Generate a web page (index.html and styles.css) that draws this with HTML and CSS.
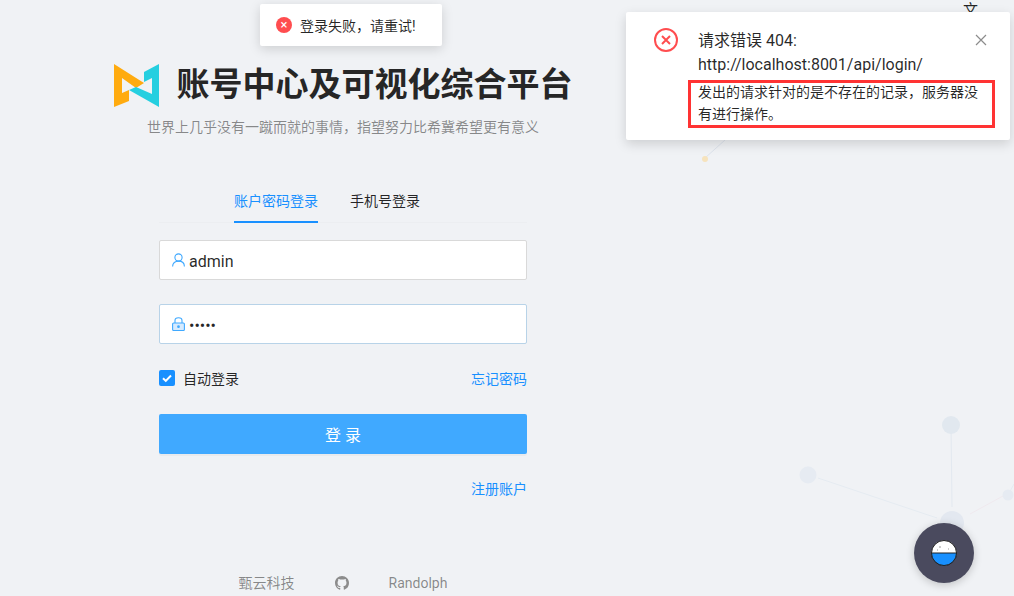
FILE: index.html
```html
<!DOCTYPE html>
<html lang="zh-CN">
<head>
  <meta charset="UTF-8" />
  <title>账号中心及可视化综合平台</title>
  <link rel="stylesheet" href="styles.css">
</head>
<body>
  <svg class="decor" width="1014" height="596" viewBox="0 0 1014 596">
    <line x1="725" y1="140" x2="705" y2="158" stroke="#dde3ec" />
    <circle cx="705" cy="159" r="3" fill="#f6e3bd" />
    <line x1="951" y1="425" x2="952" y2="507" stroke="#e3e9f0" />
    <line x1="818" y1="478" x2="937" y2="518" stroke="#e5ebf1" />
    <line x1="970" y1="514" x2="1003" y2="496" stroke="#efe9ee" />
    <line x1="1008" y1="495" x2="1014" y2="484" stroke="#e5ebf1" />
    <circle cx="951" cy="425" r="9" fill="#e1e8ef" />
    <circle cx="808" cy="475" r="8.5" fill="#e6ebf2" />
    <circle cx="952" cy="523" r="12" fill="#e3e8f0" />
    <circle cx="1008" cy="495" r="5.5" fill="#e6ebf2" />
  </svg>

  <span class="lang">文</span>

  <div class="message">
    <span class="message-icon">×</span>
    <span>登录失败&#xFF0C;请重试!</span>
  </div>

  <div class="notice">
    <svg class="notice-icon" width="24" height="24" viewBox="0 0 24 24" fill="none" stroke="#ff4d4f">
      <circle cx="12" cy="12" r="11" stroke-width="2" />
      <path d="M8 8l8 8M16 8l-8 8" stroke-width="2" />
    </svg>
    <div class="notice-body">
      <div class="notice-title">请求错误 404: http://localhost:8001/api/login/</div>
      <div class="notice-desc">发出的请求针对的是不存在的记录&#xFF0C;服务器没有进行操作。</div>
    </div>
    <svg class="notice-close" width="12" height="12" viewBox="0 0 12 12" stroke="#8c8c8c" stroke-width="1.2">
      <path d="M1 1l10 10M11 1L1 11" />
    </svg>
  </div>

  <div class="page">
    <div class="brand">
      <svg class="logo" width="45" height="43" viewBox="0 0 45 43">
        <polygon fill="#ffab0f" points="0,0 30,19 22,24 8,14 8,29 15,26 15,37 0,43" />
        <polygon fill="#25cfe0" points="45,0 45,43 15,26 22,23 38,30 38,14 30,18 30,8" />
      </svg>
      <h1>账号中心及可视化综合平台</h1>
    </div>
    <p class="slogan">世界上几乎没有一蹴而就的事情&#xFF0C;指望努力比希冀希望更有意义</p>

    <form class="login">
      <div class="tabs">
        <a class="tab active">账户密码登录</a>
        <a class="tab">手机号登录</a>
      </div>

      <div class="field">
        <svg width="13" height="14" viewBox="0 0 13 14" fill="none" stroke="#40a9ff" stroke-width="1.1">
          <circle cx="6.5" cy="4.5" r="3.6" />
          <path d="M.6 13.500c0-3.400 2.500-5.400 5.900-5.400s5.900 2 5.900 5.400" />
        </svg>
        <input type="text" value="admin" />
      </div>

      <div class="field field-focus">
        <svg width="13" height="14" viewBox="0 0 13 14" fill="none" stroke="#40a9ff" stroke-width="1.1">
          <rect x=".6" y="6" width="11.800" height="7.500" rx="1" fill="#d6ebff" />
          <path d="M3 6V3.500C3 1.800 4.500 .8 6.500 .8s3.500 1 3.500 2.700V6" />
          <circle cx="6.500" cy="9.700" r=".8" fill="#40a9ff" />
        </svg>
        <input type="password" value="admin" />
      </div>

      <div class="options">
        <label class="remember">
          <span class="check">
            <svg width="16" height="16" viewBox="0 0 16 16" fill="none" stroke="#fff" stroke-width="2">
              <path d="M4 8.200l2.800 2.700L12 5.500" />
            </svg>
          </span>
          自动登录
        </label>
        <a class="link">忘记密码</a>
      </div>

      <button type="button" class="submit">登 录</button>

      <div class="register"><a class="link">注册账户</a></div>
    </form>

    <div class="footer">
      <span>甄云科技</span>
      <svg width="14" height="14" viewBox="0 0 16 16" fill="#8c8c8c">
        <path d="M8 0C3.58 0 0 3.58 0 8c0 3.54 2.29 6.53 5.47 7.59.4.07.55-.17.55-.38 0-.19-.01-.82-.01-1.49-2.01.37-2.53-.49-2.69-.94-.09-.23-.48-.94-.82-1.13-.28-.15-.68-.52-.01-.53.63-.01 1.08.58 1.23.82.72 1.21 1.87.87 2.33.66.07-.52.28-.87.51-1.07-1.78-.2-3.64-.89-3.64-3.95 0-.87.31-1.59.82-2.15-.08-.2-.36-1.02.08-2.12 0 0 .67-.21 2.2.82.64-.18 1.32-.27 2-.27.68 0 1.36.09 2 .27 1.53-1.04 2.2-.82 2.2-.82.44 1.1.16 1.92.08 2.12.51.56.82 1.27.82 2.15 0 3.07-1.87 3.75-3.65 3.95.29.25.54.73.54 1.48 0 1.07-.01 1.93-.01 2.2 0 .21.15.46.55.38A8.013 8.013 0 0016 8c0-4.42-3.58-8-8-8z" />
      </svg>
      <span>Randolph</span>
    </div>
  </div>

  <div class="fab">
    <svg width="26" height="28" viewBox="0 0 26 28">
      <circle cx="13" cy="14" r="12.500" fill="#fff" stroke="#222" stroke-width="1" />
      <path d="M.5 14h25a12.500 12.500 0 0 1-25 0z" fill="#1890ff" stroke="#222" stroke-width="1" />
      <path d="M8 8h2M17 10h1M6 11h1" stroke="#999" stroke-width="1" />
    </svg>
  </div>
</body>
</html>
```

FILE: styles.css
```css
* { box-sizing: border-box; }
html, body { margin: 0; height: 100%; }
body {
  position: relative;
  overflow: hidden;
  background-color: #f0f2f5;
  color: rgba(0,0,0,0.85);
  font-family: Roboto, "Noto Sans CJK SC", sans-serif;
  font-size: 14px;
}
a { cursor: pointer; }

.decor { position: absolute; top: 0; left: 0; }
.lang { position: absolute; top: 0; left: 963px; font-size: 15px; line-height: 20px; }

.message {
  position: absolute;
  top: 4px;
  left: 260px;
  width: 182px;
  height: 42px;
  display: flex;
  align-items: center;
  gap: 8px;
  padding-left: 16px;
  background: white;
  border-radius: 2px;
  box-shadow: 0 3px 12px rgba(0,0,0,0.15);
}
.message-icon {
  width: 16px;
  height: 16px;
  border-radius: 50%;
  background-color: #ff4d4f;
  color: white;
  font-size: 13px;
  line-height: 16px;
  text-align: center;
}

.notice {
  position: absolute;
  top: 12px;
  left: 626px;
  width: 384px;
  height: 128px;
  display: flex;
  padding: 16px 23px 0 28px;
  background: white;
  border-radius: 2px;
  box-shadow: 0 4px 12px rgba(0,0,0,0.15);
}
.notice-icon { flex: none; margin: 0 20px 0 0; }
.notice-body { flex: 1; min-width: 0; }
.notice-title { font-size: 16px; line-height: 24px; width: 250px; padding-top: 1px; }
.notice-desc {
  width: 307px;
  height: 48px;
  margin: 3px 0 0 -10px;
  padding: 1px 13px 0 10px;
  outline: 3px solid #ff3333;
  outline-offset: -3px;
  line-height: 22px;
}
.notice-close { flex: none; margin-top: 6px; }

.page { width: 686px; padding-top: 60px; }
.brand { display: flex; align-items: center; justify-content: center; gap: 18px; }
.brand h1 { margin: 0; font-size: 33px; line-height: 50px; font-weight: 700; white-space: nowrap; color: #262626; }
.logo { flex: none; }
.slogan { margin: 6px 0 0; text-align: center; color: rgba(0,0,0,0.45); line-height: 22px; }

.login { width: 368px; margin: 45px auto 0; }
.tabs { display: flex; justify-content: center; gap: 32px; padding-right: 32px; height: 40px; border-bottom: 1px solid #eceef1; margin-bottom: 17px; }
.tab { height: 40px; padding-top: 7px; line-height: 22px; }
.tab.active { color: #1890ff; border-bottom: 2px solid #1890ff; }

.field {
  display: flex;
  align-items: center;
  gap: 4px;
  height: 40px;
  padding: 0 12px;
  margin-bottom: 24px;
  background: white;
  border: 1px solid #d9d9d9;
  border-radius: 2px;
}
.field-focus { border-color: #b8d3e8; margin-bottom: 23px; }
.field input {
  flex: 1;
  min-width: 0;
  border: none;
  outline: none;
  padding: 3px 0 0;
  background: transparent;
  color: rgba(0,0,0,0.85);
  font: inherit;
  font-size: 16px;
}

.options { display: flex; align-items: center; justify-content: space-between; height: 22px; }
.remember { display: flex; align-items: center; gap: 8px; }
.check { width: 16px; height: 16px; background-color: #1890ff; border-radius: 2px; display: block; }
.check svg { display: block; }
.link { color: #1890ff; }

.submit {
  display: block;
  width: 100%;
  height: 40px;
  margin-top: 25px;
  background-color: #40a9ff;
  color: white;
  border: none;
  border-radius: 2px;
  font: inherit;
  font-size: 16px;
  cursor: pointer;
  box-shadow: 0 2px 0 rgba(0,0,0,0.03);
}
.register { text-align: right; margin-top: 24px; line-height: 22px; }

.footer { display: flex; align-items: center; justify-content: center; gap: 40px; margin-top: 72px; color: rgba(0,0,0,0.45); line-height: 22px; }

.fab {
  position: absolute;
  top: 523px;
  left: 914px;
  width: 60px;
  height: 60px;
  display: flex;
  align-items: center;
  justify-content: center;
  border-radius: 50%;
  background-color: #4a4a5e;
  box-shadow: 0 2px 8px rgba(0,0,0,0.2);
}
```
